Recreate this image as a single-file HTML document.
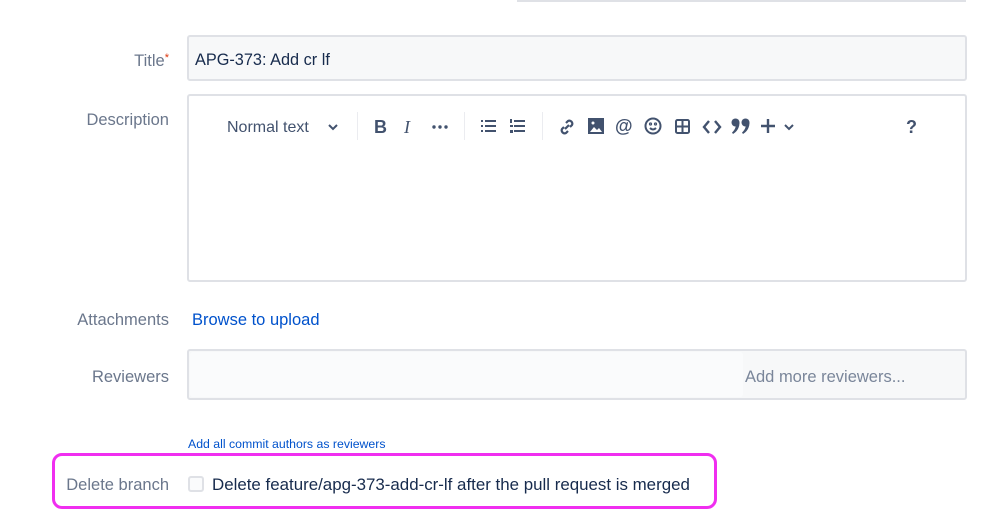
<!DOCTYPE html>
<html><head><meta charset="utf-8"><style>
body{margin:0;width:987px;height:514px;background:#fff;font-family:"Liberation Sans",sans-serif;position:relative;overflow:hidden;color:#172b4d}
.a{position:absolute}
.lbl{position:absolute;color:#6b778c;font-size:16.5px;text-align:right;right:818px;white-space:nowrap}
.box{position:absolute;left:187px;width:776px;border:2px solid #dfe1e6;border-radius:3px}
</style></head><body>
<div class="a" style="left:517px;top:0;width:449px;height:2px;background:#dfe1e6"></div>

<div class="lbl" style="top:52px">Title<span style="color:#de350b;font-size:11px;vertical-align:top">*</span></div>
<div class="box" style="top:35px;height:42px;background:#f7f8f9"></div>
<div class="a" style="left:195px;top:51px;font-size:16.3px;color:#172b4d">APG-373: Add cr lf</div>

<div class="lbl" style="top:111px">Description</div>
<div class="box" style="top:94px;height:184px;background:#fff"></div>
<div class="a" style="left:227px;top:119px;font-size:16px;color:#42526e">Normal text</div>
<svg class="a" style="left:327px;top:122px" width="12" height="10"><path d="M2 3l4 4 4-4" stroke="#42526e" stroke-width="2" fill="none"/></svg>
<div class="a" style="left:357px;top:112px;width:1px;height:28px;background:#ebecf0"></div>
<div class="a" style="left:374px;top:117px;font-size:18px;font-weight:bold;color:#42526e">B</div>
<div class="a" style="left:404px;top:117px;font-size:18px;font-style:italic;color:#42526e;font-family:'Liberation Serif',serif">I</div>
<svg class="a" style="left:432px;top:125px" width="18" height="4" fill="#42526e"><circle cx="2" cy="2" r="1.7"/><circle cx="8" cy="2" r="1.7"/><circle cx="14" cy="2" r="1.7"/></svg>
<div class="a" style="left:464px;top:112px;width:1px;height:28px;background:#ebecf0"></div>
<svg class="a" style="left:481px;top:119px" width="16" height="14" fill="#42526e"><rect x="0" y="1" width="2" height="2"/><rect x="0" y="6" width="2" height="2"/><rect x="0" y="11" width="2" height="2"/><rect x="4" y="1" width="11" height="2"/><rect x="4" y="6" width="11" height="2"/><rect x="4" y="11" width="11" height="2"/></svg>
<svg class="a" style="left:510px;top:119px" width="16" height="14" fill="#42526e"><rect x="0" y="0" width="2" height="4"/><rect x="0" y="6" width="3" height="2"/><rect x="0" y="11" width="3" height="3"/><rect x="4" y="1" width="11" height="2"/><rect x="4" y="6" width="11" height="2"/><rect x="4" y="11" width="11" height="2"/></svg>
<div class="a" style="left:542px;top:112px;width:1px;height:28px;background:#ebecf0"></div>
<svg class="a" style="left:558px;top:118px" width="18" height="18" fill="none" stroke="#42526e" stroke-width="2.2"><path d="M8 5l2-2a3 3 0 014 4l-2 2M10 13l-2 2a3 3 0 01-4-4l2-2M7 11l4-4"/></svg>
<svg class="a" style="left:588px;top:118px" width="17" height="17"><rect x="0" y="0" width="16" height="16" fill="#42526e"/><path d="M2 14l4-5 3 3 2-2 3 4z" fill="#fff"/><circle cx="5" cy="5" r="1.5" fill="#fff"/></svg>
<div class="a" style="left:615px;top:116px;font-size:18px;color:#42526e;font-weight:bold">@</div>
<svg class="a" style="left:644px;top:117px" width="18" height="18" fill="none" stroke="#42526e" stroke-width="2"><circle cx="9" cy="9" r="7.5"/><path d="M6 11q3 3 6 0"/><circle cx="6.5" cy="7" r=".6"/><circle cx="11.5" cy="7" r=".6"/></svg>
<svg class="a" style="left:675px;top:119px" width="16" height="16" fill="none" stroke="#42526e" stroke-width="2"><rect x="1" y="1" width="13" height="13" rx="1.5"/><path d="M7.5 1v13M1 7.5h13"/></svg>
<svg class="a" style="left:702px;top:119px" width="20" height="16" fill="none" stroke="#42526e" stroke-width="2.4"><path d="M7 2L2 8l5 6M13 2l5 6-5 6"/></svg>
<svg class="a" style="left:731px;top:118px" width="20" height="18" fill="#42526e"><circle cx="4.5" cy="4.5" r="4"/><path d="M8.5 4.5Q8.5 12 2 16l-1-1.5Q5 11 5 6z"/><circle cx="14.5" cy="4.5" r="4"/><path d="M18.5 4.5Q18.5 12 12 16l-1-1.5Q15 11 15 6z"/></svg>
<svg class="a" style="left:760px;top:118px" width="16" height="16" stroke="#42526e" stroke-width="2.4"><path d="M8 1v14M1 8h14"/></svg>
<svg class="a" style="left:783px;top:122px" width="12" height="10"><path d="M2 3l4 4 4-4" stroke="#42526e" stroke-width="2" fill="none"/></svg>
<div class="a" style="left:906px;top:117px;font-size:18px;font-weight:bold;color:#42526e">?</div>

<div class="lbl" style="top:311px">Attachments</div>
<div class="a" style="left:192px;top:311px;font-size:16.5px;color:#0052cc">Browse to upload</div>

<div class="lbl" style="top:368px">Reviewers</div>
<div class="box" style="top:349px;height:47px;background:#f7f8f9"></div>
<div class="a" style="left:190px;top:352px;width:553px;height:45px;background:#fafbfc;border-radius:3px"></div>
<div class="a" style="left:745px;top:368px;font-size:16.5px;color:#7a869a">Add more reviewers...</div>

<div class="a" style="left:188px;top:437px;font-size:12.3px;color:#0052cc">Add all commit authors as reviewers</div>

<div class="a" style="left:52px;top:453px;width:659px;height:50px;border:3px solid #f02ef0;border-radius:10px"></div>
<div class="lbl" style="top:476px">Delete branch</div>
<div class="a" style="left:188px;top:476px;width:12px;height:12px;border:2px solid #dfe1e6;border-radius:3px;background:#fafbfc"></div>
<div class="a" style="left:212px;top:475px;font-size:16.9px;color:#172b4d;white-space:nowrap">Delete feature/apg-373-add-cr-lf after the pull request is merged</div>
</body></html>
